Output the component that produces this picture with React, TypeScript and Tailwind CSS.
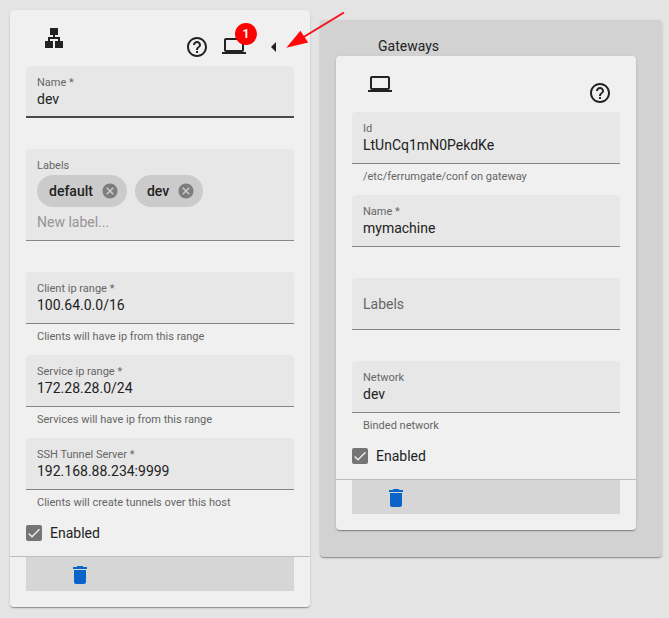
import type { ReactNode } from "react";
import { MdArrowLeft, MdCancel, MdComputer, MdDelete, MdHelpOutline, MdLan } from "react-icons/md";

const cardShadow = "shadow-[0_2px_1px_-1px_rgba(0,0,0,0.2),0_1px_1px_rgba(0,0,0,0.14),0_1px_3px_rgba(0,0,0,0.12)]";

type FieldProps = {
  id: string;
  label: string;
  value?: string;
  hint?: string;
  required?: boolean;
  active?: boolean;
};

const Field = ({ id, label, value, hint, required, active }: FieldProps) => {
  return <div>
      <div className={`h-[52px] rounded-t bg-[#e7e7e7] px-[11px] ${active ? "border-b-2 border-[#4a4a4e]" : "border-b border-[#858585]"}`}>
        {value ? <>
            <label htmlFor={id} className="block pt-[11px] text-[11px] leading-3 text-[#666]">
              {label}{required && " *"}
            </label>
            <input id={id} defaultValue={value} className="mt-px block h-[18px] w-full bg-transparent text-[14px] text-[#222] outline-none" />
          </> : <input id={id} aria-label={label} placeholder={label} className="block h-full w-full bg-transparent text-[14px] outline-none placeholder:text-[#666]" />}
      </div>
      <p className="h-[31px] px-[11px] pt-[7px] text-[11px] leading-3 text-[#666]">{hint}</p>
    </div>;
};

const Chip = ({ name }: { name: string }) => {
  return <div className="flex h-8 items-center gap-2 rounded-full bg-[#cbcbcb] pl-3 pr-2 text-[14px] font-medium text-[#222]">
      {name}
      <button type="button" aria-label={`Remove ${name}`}>
        <MdCancel className="size-[18px] text-[#7d7d7d]" />
      </button>
    </div>;
};

const IconButton = ({ label, children }: { label: string; children: ReactNode }) => {
  return <button type="button" aria-label={label} className="flex h-[42px] w-10 items-center justify-center">
      {children}
    </button>;
};

const Enabled = ({ id }: { id: string }) => {
  return <div className="mb-[11px] flex h-6 items-center gap-2">
      <span className="relative size-4">
        <input id={id} type="checkbox" defaultChecked className="block size-4 appearance-none rounded-[2px] bg-[#757575]" />
        <svg viewBox="0 0 24 24" className="pointer-events-none absolute inset-0 size-4" fill="none" stroke="#f0f0f0" strokeWidth="2">
          <path d="M4.1 12.7 9 17.6 20.3 6.3" />
        </svg>
      </span>
      <label htmlFor={id} className="text-[14px] text-[#222]">Enabled</label>
    </div>;
};

const Actions = ({ className }: { className: string }) => {
  return <div className="border-t border-[#bdbdbd] px-4 pb-4">
      <div className={`flex h-[34px] items-center bg-[#d6d6d6] pt-0.5 ${className}`}>
        <IconButton label="Delete">
          <MdDelete className="size-6 text-[#0d64c8]" />
        </IconButton>
      </div>
    </div>;
};

const NetworkCard = () => {
  return <section className={`rounded bg-[#f0f0f0] ${cardShadow}`}>
      <div className="px-4 pt-4">
        <header className="flex h-10 items-start justify-between pl-4">
          <MdLan className="size-6" />
          <div className="flex items-start">
            <IconButton label="Help">
              <MdHelpOutline className="size-6" />
            </IconButton>
            <div className="relative ml-[5px] mr-2 mt-2">
              <MdComputer className="size-6" />
              <span className="absolute -right-[11px] -top-[11px] flex size-[22px] items-center justify-center rounded-full bg-[#ff0000] text-[12px] font-bold text-white">1</span>
            </div>
            <IconButton label="Collapse">
              <MdArrowLeft className="size-6" />
            </IconButton>
          </div>
        </header>

        <Field id="network-name" label="Name" value="dev" required active />

        <div className="mb-[31px] h-[92px] rounded-t border-b border-[#858585] bg-[#e7e7e7] px-[11px] pt-[11px]">
          <label htmlFor="network-labels" className="block text-[11px] leading-3 text-[#666]">Labels</label>
          <div className="mt-[3px] flex gap-2">
            <Chip name="default" />
            <Chip name="dev" />
          </div>
          <input id="network-labels" placeholder="New label..." className="mt-1.5 block h-[18px] w-full bg-transparent text-[14px] outline-none placeholder:text-[#959595]" />
        </div>

        <Field id="client-range" label="Client ip range" value="100.64.0.0/16" hint="Clients will have ip from this range" required />
        <Field id="service-range" label="Service ip range" value="172.28.28.0/24" hint="Services will have ip from this range" required />
        <Field id="ssh-server" label="SSH Tunnel Server" value="192.168.88.234:9999" hint="Clients will create tunnels over this host" required />
        <Enabled id="network-enabled" />
      </div>
      <Actions className="pl-[34px]" />
    </section>;
};

const GatewayCard = () => {
  return <section className={`rounded bg-[#f0f0f0] ${cardShadow}`}>
      <div className="px-4 pt-4">
        <header className="flex h-10 items-start justify-between pl-4">
          <MdComputer className="size-6" />
          <IconButton label="Help">
            <MdHelpOutline className="size-6" />
          </IconButton>
        </header>

        <Field id="gateway-id" label="Id" value="LtUnCq1mN0PekdKe" hint="/etc/ferrumgate/conf on gateway" />
        <Field id="gateway-name" label="Name" value="mymachine" required />
        <Field id="gateway-labels" label="Labels" />
        <Field id="gateway-network" label="Network" value="dev" hint="Binded network" />
        <Enabled id="gateway-enabled" />
      </div>
      <Actions className="pl-6" />
    </section>;
};

const App = () => {
  return <main className="relative grid min-h-screen grid-cols-[300fr_342fr] items-start gap-2.5 bg-[#e4e4e4] py-2.5 pl-2.5 pr-[7px] font-[Roboto,sans-serif] text-[#222]">
      <NetworkCard />

      <div className={`mt-2.5 rounded bg-[#d2d2d2] pb-[27px] pl-4 pr-[26px] pt-4 ${cardShadow}`}>
        <h2 className="pl-[42px] text-[14px] leading-5">Gateways</h2>
        <GatewayCard />
      </div>

      {/* pointer to the collapse button */}
      <svg className="pointer-events-none absolute left-[284px] top-2.5" width="64" height="42" viewBox="0 0 64 42" aria-hidden="true">
        <path d="M60 2.5 18 28" stroke="#f5101a" strokeWidth="2" fill="none" />
        <path d="M2.3 37.8 16.4 20.8 24.2 32.6Z" fill="#ff0a0a" />
      </svg>
    </main>;
};

export default App;
